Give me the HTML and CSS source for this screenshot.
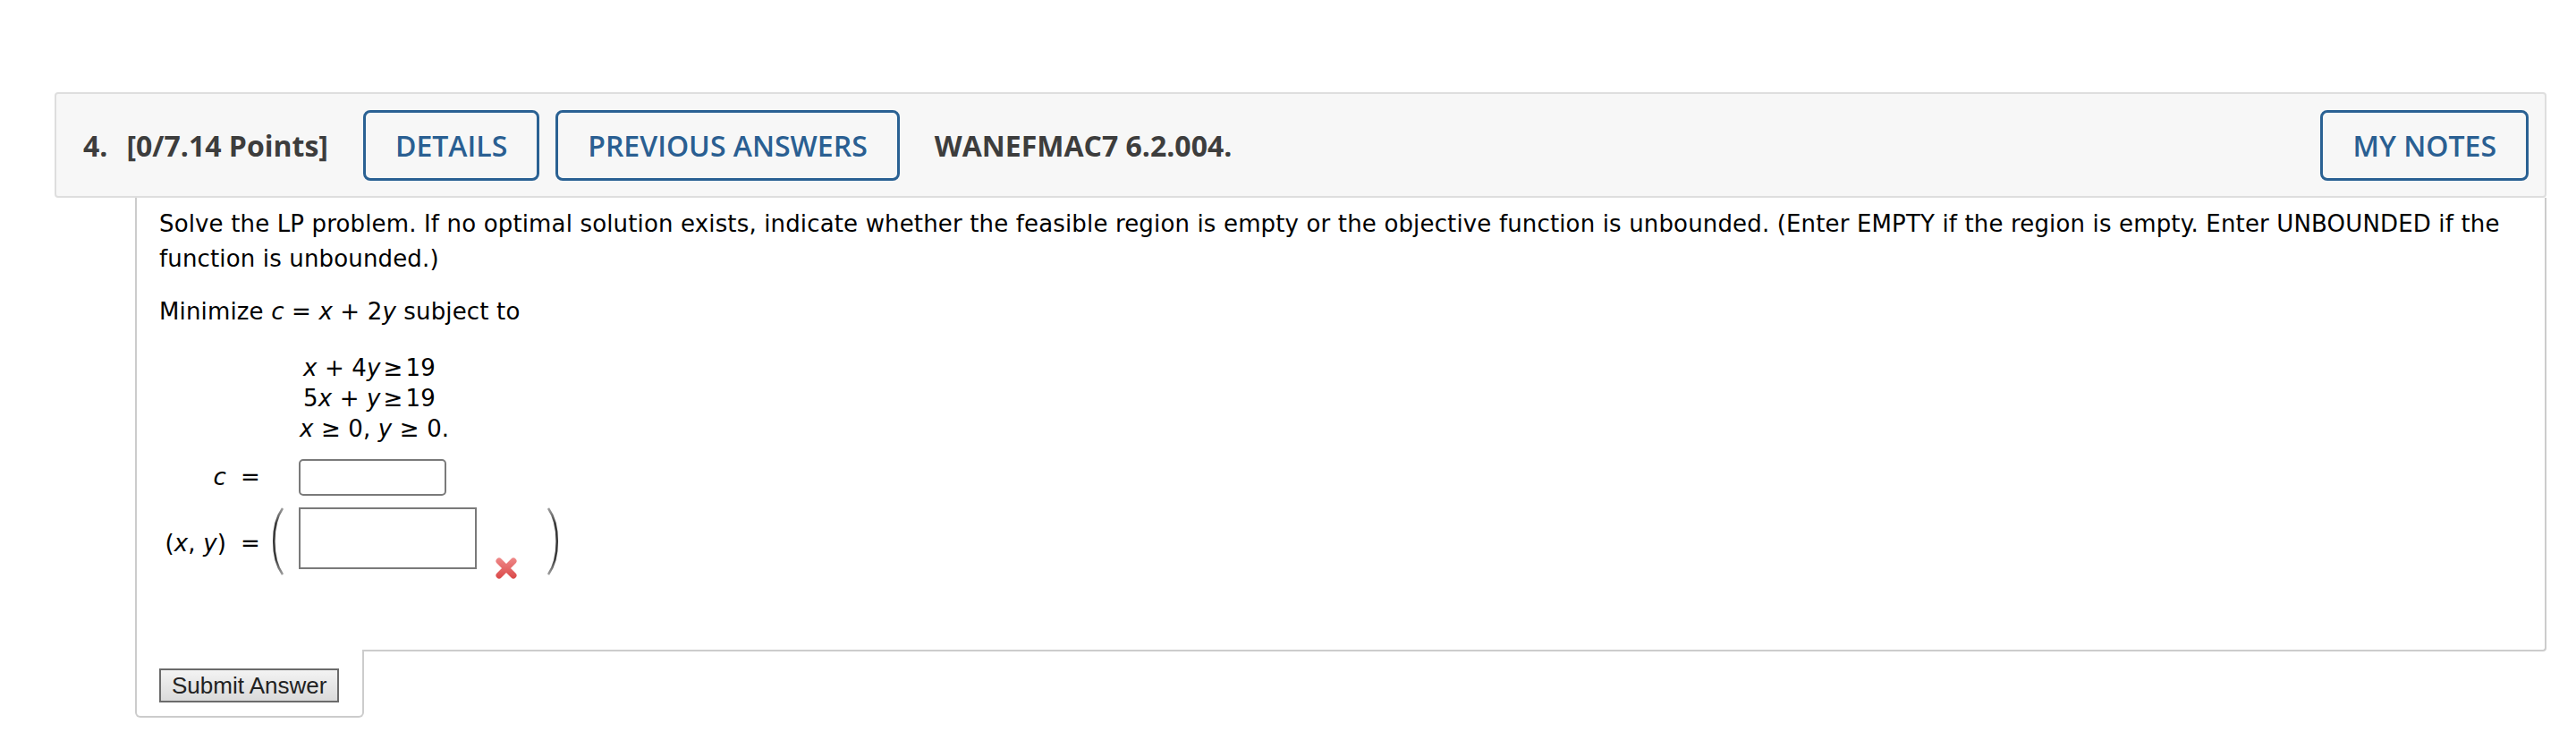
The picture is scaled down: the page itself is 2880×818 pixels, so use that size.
FILE: index.html
```html
<!DOCTYPE html>
<html>
<head>
<meta charset="utf-8">
<title>Question 4</title>
<link rel="stylesheet" href="styles.css">
</head>
<body>
<div class="page">
  <div class="qhead">
    <span class="qnum">4.</span>
    <span class="qpts">[0/7.14 Points]</span>
    <button class="qbtn details">DETAILS</button>
    <button class="qbtn prev">PREVIOUS ANSWERS</button>
    <span class="qcode">WANEFMAC7 6.2.004.</span>
    <button class="qbtn notes">MY NOTES</button>
  </div>
  <div class="qbody">
    <p class="prompt">Solve the LP problem. If no optimal solution exists, indicate whether the feasible region is empty or the objective function is unbounded. (Enter EMPTY if the region is empty. Enter UNBOUNDED if the function is unbounded.)</p>
    <p class="prompt minimize">Minimize <i>c</i> = <i>x</i> + 2<i>y</i> subject to</p>
    <div class="constraints">
      <div class="con"><i>x</i> + 4<i>y</i><span class="rel">≥</span>19</div>
      <div class="con"><span class="lead">5<i>x</i> + <i>y</i></span><span class="rel">≥</span>19</div>
      <div class="con last"><i>x</i> ≥ 0, <i>y</i> ≥ 0.</div>
    </div>
    <div class="answers">
      <div class="lbl"><i>c</i></div>
      <div class="eq">=</div>
      <div class="cell c-cell"><input class="ans ans-c" type="text"></div>

      <div class="lbl">(<i>x</i>, <i>y</i>)</div>
      <div class="eq">=</div>
      <div class="cell xy-cell">
        <svg class="paren" width="18" height="78" viewBox="0 0 18 78">
          <defs>
            <linearGradient id="pg" x1="0" y1="0" x2="0" y2="78" gradientUnits="userSpaceOnUse">
              <stop offset="0" stop-color="#aaaaaa"/>
              <stop offset="0.25" stop-color="#3a3a3a"/>
              <stop offset="0.75" stop-color="#3a3a3a"/>
              <stop offset="1" stop-color="#aaaaaa"/>
            </linearGradient>
          </defs>
          <path d="M16 2 C 3 20, 3 58, 16 76" fill="none" stroke="url(#pg)" stroke-width="2.6"/>
        </svg>
        <input class="ans ans-xy" type="text">
        <svg class="xmark" width="26" height="26" viewBox="0 0 26 26">
          <defs>
            <linearGradient id="xg" x1="0" y1="0" x2="0" y2="26" gradientUnits="userSpaceOnUse">
              <stop offset="0" stop-color="#f08c8c"/>
              <stop offset="1" stop-color="#d94545"/>
            </linearGradient>
          </defs>
          <path d="M5 5 L21 21 M21 5 L5 21" stroke="url(#xg)" stroke-width="7" stroke-linecap="round"/>
        </svg>
        <svg class="paren paren-r" width="18" height="78" viewBox="0 0 18 78">
          <path d="M2 2 C 15 20, 15 58, 2 76" fill="none" stroke="url(#pg)" stroke-width="2.6"/>
        </svg>
      </div>
    </div>
  </div>
  <div class="qfoot">
    <button class="submit">Submit Answer</button>
  </div>
</div>
</body>
</html>
```
FILE: styles.css
```css
html, body {
  margin: 0;
  padding: 0;
  background: #ffffff;
}

.page {
  padding: 103px 33px 0 61px;
}

/* ---------- question header ---------- */
.qhead {
  display: flex;
  align-items: center;
  height: 114px;
  background: #f7f7f7;
  border: 2px solid #dedede;
  border-radius: 4px;
  padding: 0 18px 0 30px;
  font-family: "Open Sans", "Liberation Sans", sans-serif;
  font-size: 32px;
  color: #3d3d3d;
}

.qnum {
  font-weight: 700;
  margin-right: 21px;
}

.qpts {
  font-weight: 700;
  margin-right: 39px;
}

.qbtn {
  box-sizing: border-box;
  height: 79px;
  padding: 0 33px;
  font-family: "Open Sans", "Liberation Sans", sans-serif;
  font-size: 32px;
  font-weight: 600;
  color: #2a5f92;
  background: #f7f7f7;
  border: 3px solid #2a6193;
  border-radius: 8px;
  white-space: nowrap;
}

.details {
  margin-right: 18px;
}

.prev {
  margin-right: 39px;
}

.qcode {
  font-weight: 700;
}

.notes {
  margin-left: auto;
}

/* ---------- question body ---------- */
.qbody {
  margin-left: 90px;
  border: 2px solid #cccccc;
  border-top: none;
  border-radius: 0 0 4px 0;
  padding: 10px 28px 78px 25px;
  font-family: "DejaVu Sans", Verdana, sans-serif;
  font-size: 26px;
  line-height: 39px;
  letter-spacing: 0.15px;
  color: #000000;
}

.prompt {
  margin: 0;
}

.minimize {
  margin-top: 20px;
}

.constraints {
  margin-top: 26px;
  padding-left: 161px;
  line-height: 34px;
}

.rel {
  margin: 0 3px;
}

.con.last {
  margin-left: -4px;
}

/* ---------- answer rows ---------- */
.answers {
  display: grid;
  grid-template-columns: 75px 47px auto;
  justify-content: start;
  align-items: center;
  row-gap: 12px;
  margin-top: 17px;
}

.lbl {
  text-align: right;
  white-space: nowrap;
}

.eq {
  padding-left: 16px;
}

.cell {
  display: flex;
  align-items: flex-start;
}

.c-cell {
  padding-left: 34px;
}

.ans {
  box-sizing: border-box;
  margin: 0;
  border: 2px solid #7a7a7a;
  background: #ffffff;
  font-family: "DejaVu Sans", Verdana, sans-serif;
  font-size: 26px;
  padding: 0 6px;
}

.ans-c {
  width: 165px;
  height: 41px;
  border-radius: 5px;
}

.ans-xy {
  width: 199px;
  height: 69px;
  margin-top: 1px;
  margin-left: 16px;
  border-radius: 0;
}

.paren {
  display: block;
  flex: none;
}

.xmark {
  display: block;
  flex: none;
  margin-left: 20px;
  margin-top: 56px;
}

.paren-r {
  margin-left: 32px;
}

/* ---------- submit tab ---------- */
.qfoot {
  width: fit-content;
  margin-left: 90px;
  margin-top: -2px;
  position: relative;
  background: #ffffff;
  border: 2px solid #cccccc;
  border-top: none;
  border-radius: 0 0 6px 6px;
  padding: 21px 26px 15px 25px;
}

.submit {
  display: block;
  box-sizing: border-box;
  height: 38px;
  padding: 0 12px;
  font-family: "Liberation Sans", Arial, sans-serif;
  font-size: 26px;
  color: #222222;
  background: linear-gradient(#f3f3f3, #dadada);
  border: 2px solid #6b6b6b;
  border-radius: 0;
}
```
